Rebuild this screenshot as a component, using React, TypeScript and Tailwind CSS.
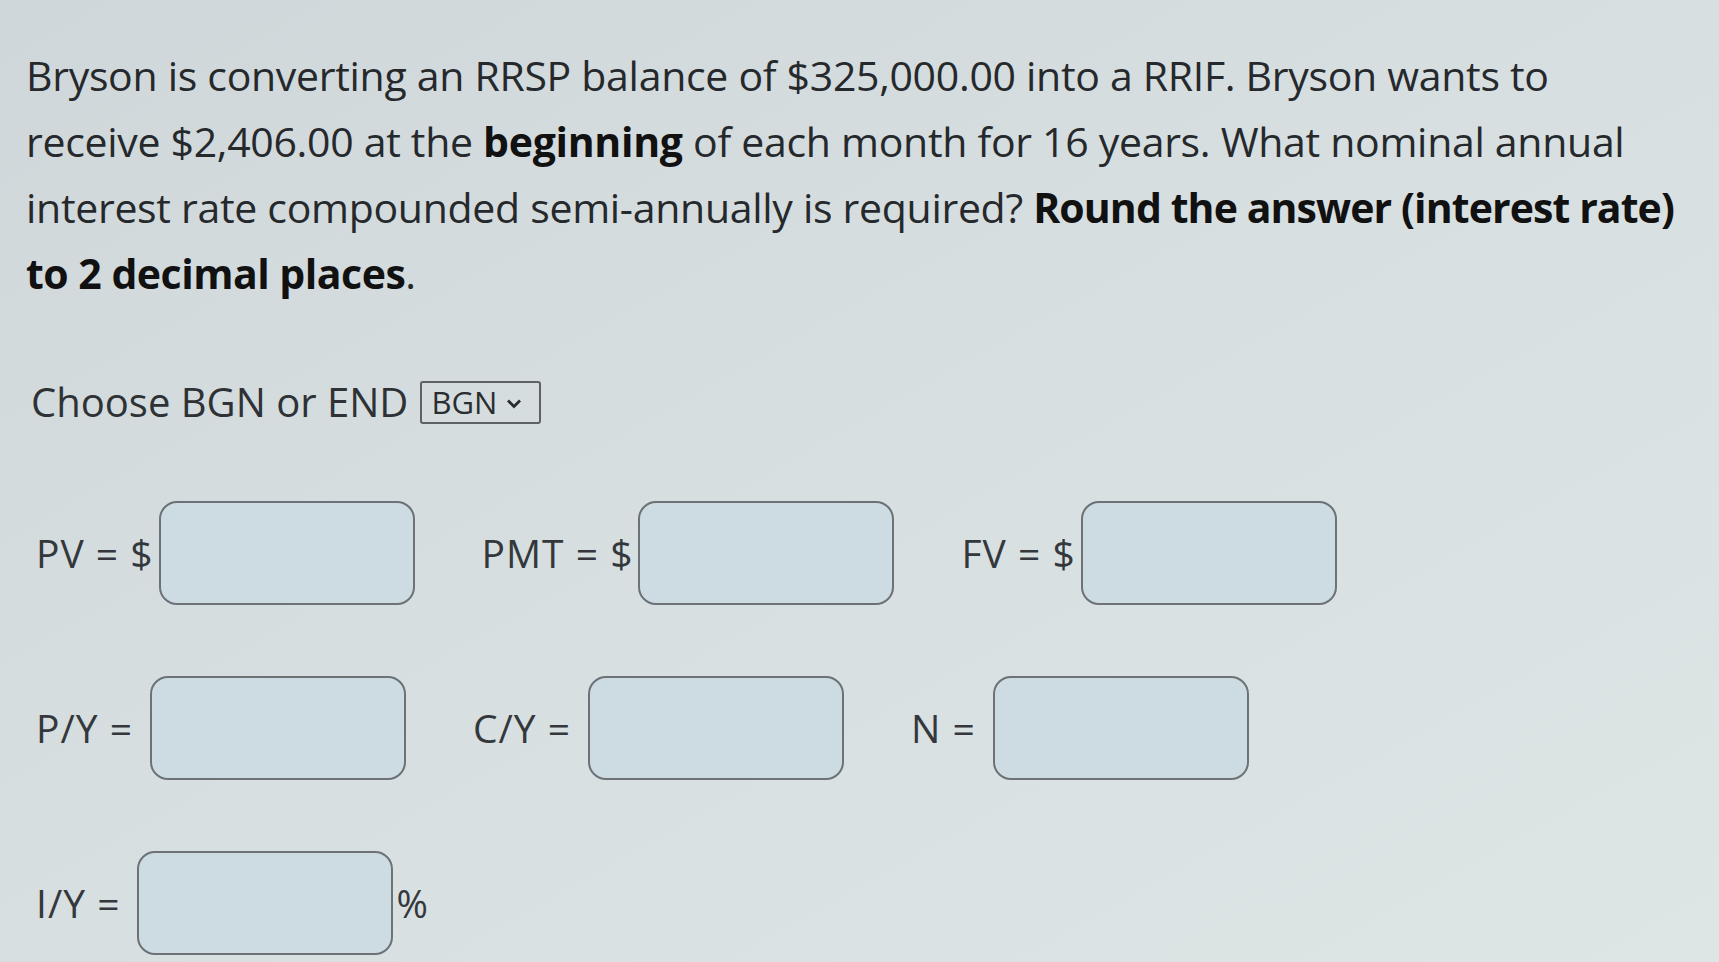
import React from "react";

const font = { fontFamily: '"Open Sans", "Noto Sans", sans-serif' };

function Field({ label, suffix, eq }: { label: string; suffix?: string; eq?: boolean }) {
  return (
    <div className="flex items-center gap-[5px]">
      <span
        className={
          eq
            ? "text-[39px] tracking-[1px] text-[#34383c] whitespace-nowrap pr-[12px]"
            : "text-[39px] tracking-[1px] text-[#34383c] whitespace-nowrap"
        }
      >
        {label}
      </span>
      <div className="w-[256px] h-[104px] rounded-[18px] border-2 border-[#6c7276] bg-[#cddbe3]" />
      {suffix && <span className="text-[38px] text-[#34383c] ml-[-2px]">{suffix}</span>}
    </div>
  );
}

export default function App() {
  return (
    <div
      className="w-[1719px] h-[962px] overflow-hidden bg-gradient-to-br from-[#d0d7da] via-[#d7dfe1] to-[#dde5e5] text-[#26292c]"
      style={font}
    >
      <div className="pl-[26px] pt-[42px]">
        <p className="text-[41px] leading-[66px] whitespace-nowrap tracking-[-0.3px]">
          Bryson is converting an RRSP balance of $325,000.00 into a RRIF. Bryson wants to
          <br />
          receive $2,406.00 at the <b className="font-bold text-[#111]">beginning</b> of each month for 16 years. What nominal annual
          <br />
          interest rate compounded semi-annually is required?{" "}
          <b className="font-bold text-[#111] tracking-[-0.9px]">Round the answer (interest rate)</b>
          <br />
          <b className="font-bold text-[#111] tracking-[-0.5px]">to 2 decimal places</b>.
        </p>

        <div className="mt-[71px] flex items-center gap-[12px] pl-[5px] h-[50px]">
          <span className="text-[40px] text-[#2e3235]">Choose BGN or END</span>
          <div className="flex items-center gap-[8px] h-[43px] w-[121px] border-2 border-[#5d6266] rounded-[3px] px-[9px]">
            <span className="text-[31px] text-[#2a2d30] leading-none">BGN</span>
            <svg width="18" height="13" viewBox="0 0 18 13" className="mt-[2px]">
              <path d="M3 3.5 L9 9.5 L15 3.5" fill="none" stroke="#2a2d30" strokeWidth="2.8" />
            </svg>
          </div>
        </div>

        <div className="mt-[74px] pl-[10px] flex flex-col gap-[71px]">
          <div className="flex items-center gap-[67px]">
            <Field label="PV = $" />
            <Field label="PMT = $" />
            <Field label="FV = $" />
          </div>
          <div className="flex items-center gap-[67px]">
            <Field label="P/Y =" eq />
            <Field label="C/Y =" eq />
            <Field label="N =" eq />
          </div>
          <div className="flex items-center gap-[67px]">
            <Field label="I/Y =" eq suffix="%" />
          </div>
        </div>
      </div>
    </div>
  );
}
